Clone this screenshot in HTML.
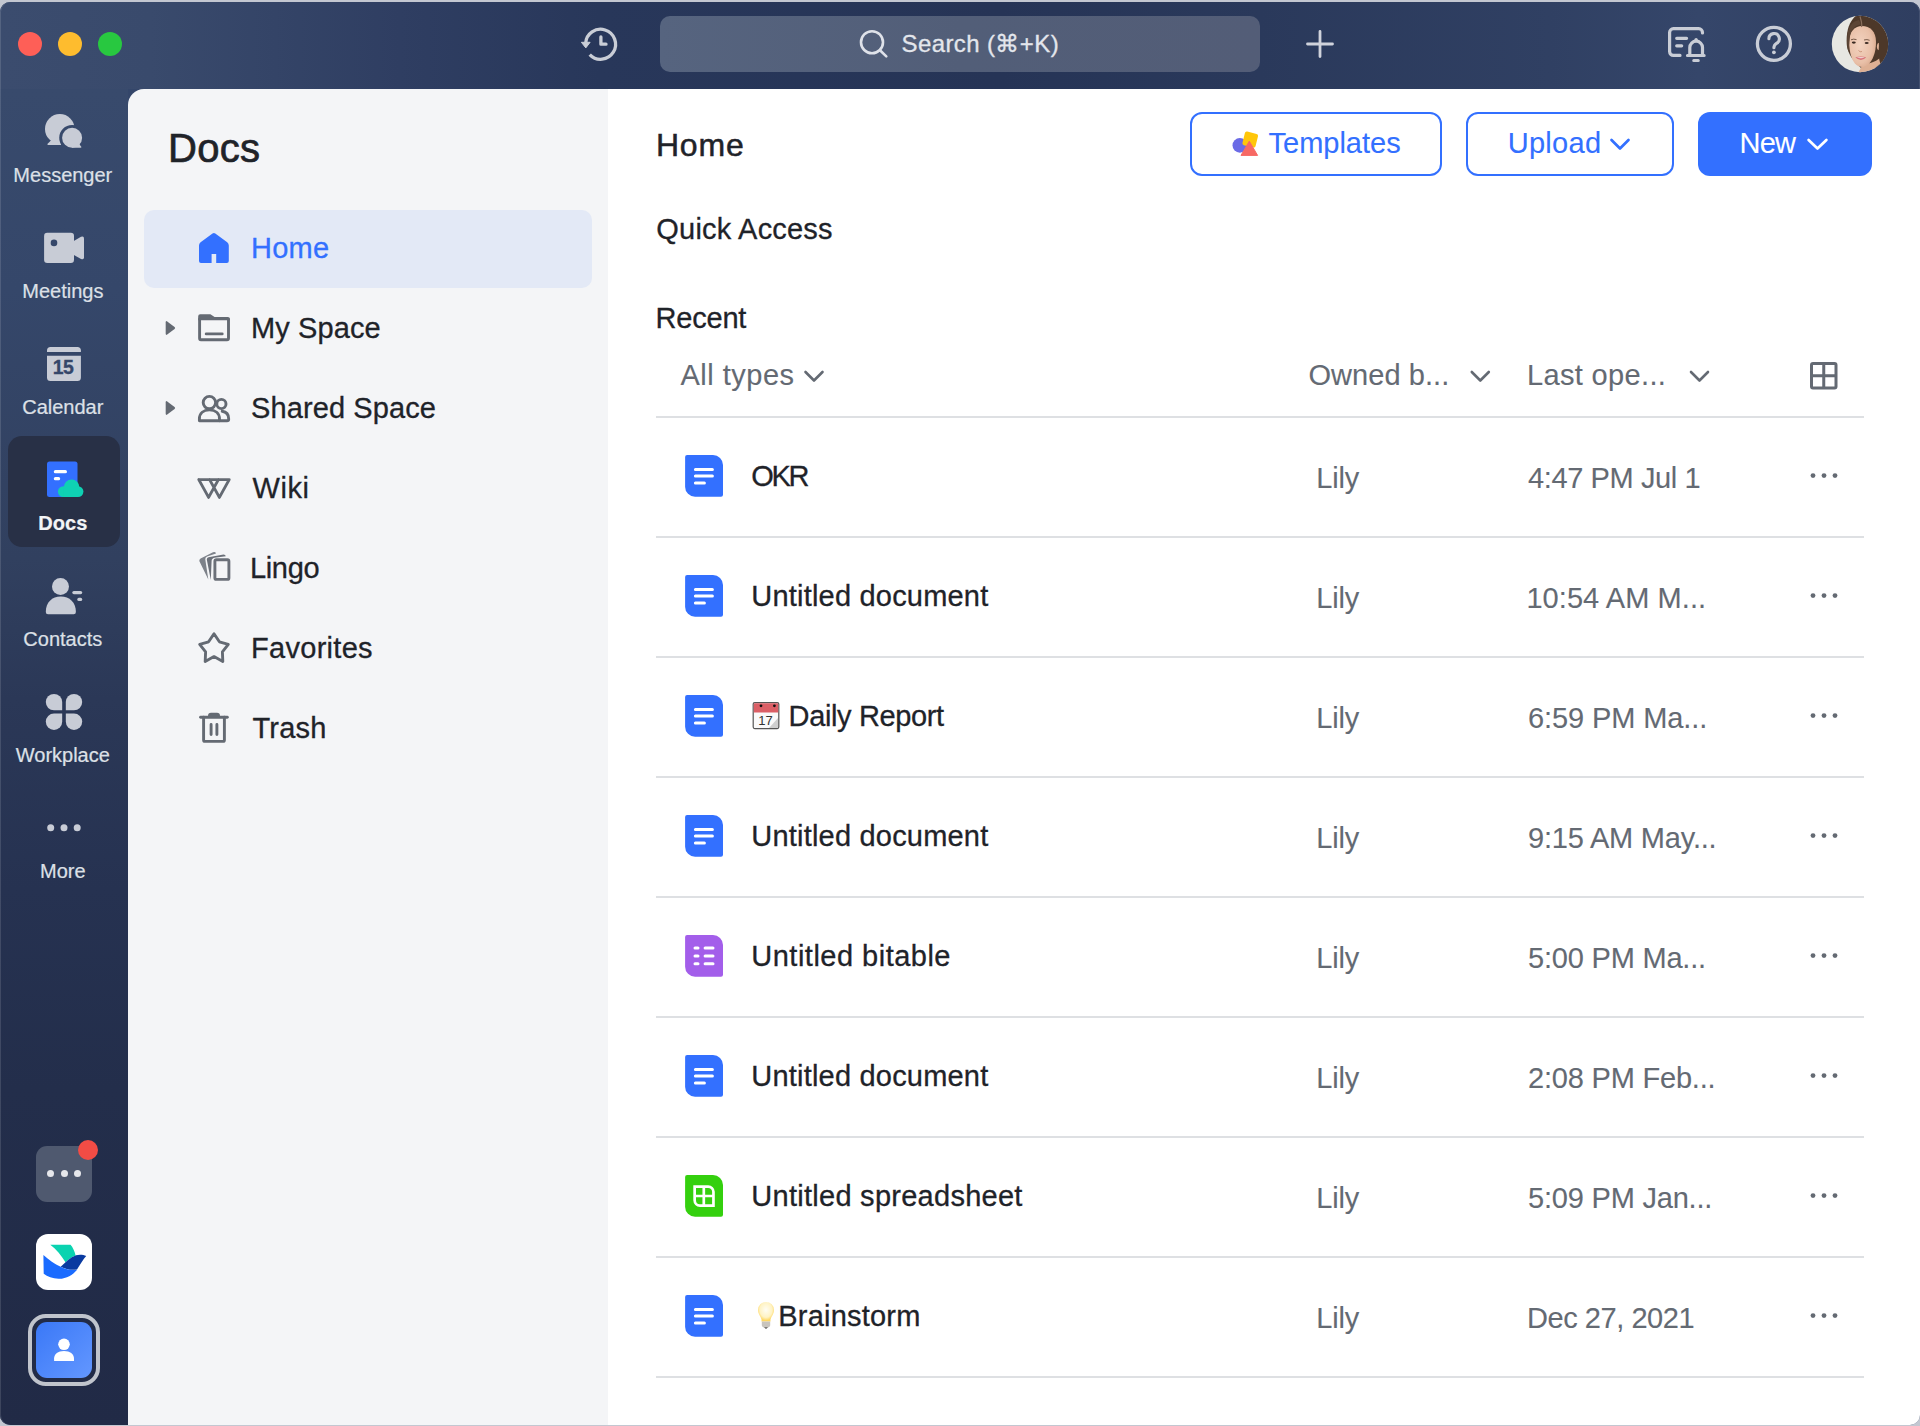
<!DOCTYPE html>
<html><head><meta charset="utf-8">
<style>
*{margin:0;padding:0;box-sizing:border-box}
html,body{width:1920px;height:1426px;overflow:hidden;background:#c3c7d1;font-family:"Liberation Sans",sans-serif}
.win{position:absolute;left:0;top:1.5px;width:1920px;height:1423.5px;border-radius:10px;overflow:hidden;background:#34466a}
.tb{position:absolute;left:0;top:0;width:1920px;height:87px;background:linear-gradient(90deg,#3b4c6e 0px,#394a6c 150px,#2f3e62 400px,#28375a 600px,#263456 1000px,#2a395b 1260px,#304063 1550px,#35466a 1700px,#2f3e60 1920px)}
.rail{position:absolute;left:0;top:87px;width:128px;height:1337px;background:linear-gradient(180deg,#384a6c 0px,#35476a 200px,#31405f 470px,#2b3857 610px,#263251 800px,#232e4b 1000px,#212a46 1337px)}
.panel{position:absolute;left:128px;top:87px;width:480px;height:1337px;background:#f4f5f7;border-top-left-radius:16px}
.main{position:absolute;left:608px;top:87px;width:1312px;height:1337px;background:#fff}
.t{position:absolute;white-space:nowrap;-webkit-text-stroke:0.3px currentColor}
.ab{position:absolute}
.lbl{position:absolute;left:-1.2px;width:128px;text-align:center;font-size:20px;line-height:20px;color:#dde0e7;-webkit-text-stroke:0.2px currentColor}
.nav{position:absolute;left:251px;font-size:29px;line-height:27.3px;color:#1f2329;letter-spacing:0.1px;-webkit-text-stroke:0.3px currentColor;white-space:nowrap}
.row-t{position:absolute;left:751px;font-size:29px;line-height:27.3px;color:#1f2329;letter-spacing:0.2px;-webkit-text-stroke:0.3px currentColor;white-space:nowrap}
.row-o{position:absolute;left:1316.3px;font-size:29px;line-height:27.3px;color:#646a73;letter-spacing:-0.2px;-webkit-text-stroke:0.1px currentColor;white-space:nowrap}
.row-d{position:absolute;left:1528px;font-size:29px;line-height:27.3px;color:#646a73;letter-spacing:-0.2px;-webkit-text-stroke:0.1px currentColor;white-space:nowrap}
.line{position:absolute;left:656px;width:1208px;height:2px;background:#dee0e3}
</style></head><body>
<div class="win">
  <div class="tb"></div>
  <div class="rail"></div>
  <div class="panel"></div>
  <div class="main"></div>
  <div class="ab" style="left:0;top:0;width:1920px;height:1423.5px;border-radius:10px;box-shadow:inset 1px 0 0 rgba(255,255,255,0.13),inset -1px 0 0 rgba(255,255,255,0.1)"></div>
</div>


<!-- rail icons -->
<svg class="ab" style="left:0;top:88px" width="128" height="1337" viewBox="0 88 128 1337">
  <defs>
    <mask id="msgm"><rect x="0" y="88" width="128" height="200" fill="#fff"/><circle cx="72.1" cy="137.8" r="12.9" fill="#000"/></mask>
  </defs>
  <g fill="#c8ccd6">
    <g mask="url(#msgm)">
      <circle cx="59.8" cy="128.9" r="14.8"/>
      <path d="M50.8 140.6 C49.8 141.9 48.6 142.9 47.6 143.8 Q46.9 144.9 48 144.9 H61 V134 Z"/>
    </g>
    <circle cx="72.1" cy="137.8" r="10"/>
    <path d="M79.6 144.3 C80.2 145.3 80.8 146.2 81.3 146.8 Q81.7 147.8 80.7 147.8 H72 V140 Z"/>
    <!-- meetings -->
    <rect x="44.1" y="232.8" width="29.9" height="30.1" rx="3.2"/>
    <circle cx="54" cy="242.9" r="3.3" fill="#35476a"/>
    <path d="M73 241.5 L81 236.8 Q84 235.5 84 238.5 V257.3 Q84 260.2 81 258.9 L73 254.6 Z"/>
    <!-- calendar -->
    <path d="M47 351.9 V350.5 A3.5 3.5 0 0 1 50.5 347 H77.4 A3.5 3.5 0 0 1 80.9 350.5 V351.9 Z"/>
    <path d="M47 355.8 H80.9 V377.4 A3.5 3.5 0 0 1 77.4 380.9 H50.5 A3.5 3.5 0 0 1 47 377.4 Z"/>
    <!-- contacts -->
    <circle cx="60.5" cy="586.5" r="8.5"/>
    <path d="M45.8 612 C45.8 602.5 52 596.6 60.8 596.6 C69.6 596.6 75.9 602.5 75.9 612 Q75.9 614.2 73.7 614.2 H48 Q45.8 614.2 45.8 612 Z"/>
    <rect x="72.3" y="591" width="9.9" height="3.2" rx="1.6"/>
    <rect x="77.3" y="597.8" width="4.9" height="3.2" rx="1.6"/>
    <!-- workplace -->
    <path d="M62.2 710.3 H54 A8.2 8.2 0 1 1 62.2 702.1 Z"/>
    <path d="M65.8 710.3 H74 A8.2 8.2 0 1 0 65.8 702.1 Z"/>
    <path d="M62.2 713.6 H54 A8.2 8.2 0 1 0 62.2 721.8 Z"/>
    <path d="M65.8 713.6 H74 A8.2 8.2 0 1 1 65.8 721.8 Z"/>
    <!-- more -->
    <circle cx="50.7" cy="827.8" r="3.5"/><circle cx="64" cy="827.8" r="3.5"/><circle cx="77.2" cy="827.8" r="3.5"/>
  </g>
</svg>
<div class="t" style="left:52.8px;top:357.6px;font-size:19.5px;line-height:19.5px;font-weight:bold;color:#35476a;letter-spacing:-0.6px">15</div>
<div class="lbl" style="top:164.8px">Messenger</div>
<div class="lbl" style="top:280.8px">Meetings</div>
<div class="lbl" style="top:396.8px">Calendar</div>
<!-- docs selected -->
<div class="ab" style="left:8px;top:436px;width:112px;height:111px;border-radius:14px;background:#283046"></div>
<svg class="ab" style="left:40px;top:455px" width="50" height="48" viewBox="40 455 50 48">
  <rect x="47" y="461.5" width="30.5" height="35.5" rx="2.5" fill="#3370ff"/>
  <rect x="53.8" y="470" width="13.2" height="3.3" rx="1.65" fill="#fff"/>
  <rect x="53.8" y="477" width="6.4" height="3.3" rx="1.65" fill="#fff"/>
  <g fill="#0fd1b3"><circle cx="63.3" cy="491.6" r="5.4"/><circle cx="71.6" cy="487.2" r="7.8"/><circle cx="78" cy="491.6" r="5.4"/><rect x="63.3" y="489" width="14.7" height="8" /></g>
</svg>
<div class="lbl" style="top:512.9px;font-weight:bold;color:#f3f4f6">Docs</div>
<div class="lbl" style="top:628.8px">Contacts</div>
<div class="lbl" style="top:744.8px">Workplace</div>
<div class="lbl" style="top:860.8px">More</div>
<!-- bottom apps -->
<div class="ab" style="left:36px;top:1146px;width:56px;height:56px;border-radius:11px;background:#4f596f"></div>
<div class="ab" style="left:47.2px;top:1170.4px;width:7px;height:7px;border-radius:50%;background:#e6e7eb"></div>
<div class="ab" style="left:60.5px;top:1170.4px;width:7px;height:7px;border-radius:50%;background:#e6e7eb"></div>
<div class="ab" style="left:73.8px;top:1170.4px;width:7px;height:7px;border-radius:50%;background:#e6e7eb"></div>
<div class="ab" style="left:78px;top:1140px;width:20px;height:20px;border-radius:50%;background:#f24c45"></div>
<div class="ab" style="left:36px;top:1234px;width:56px;height:56px;border-radius:12px;background:#fff"></div>
<svg class="ab" style="left:36px;top:1234px" width="56" height="56" viewBox="36 1234 56 56">
  <path d="M50.3 1244.7 H70.5 C72.8 1247.2 74.6 1251 75.6 1255.5 C71.5 1257 68.5 1259.5 65.5 1262.3 C61.5 1255.5 56.5 1249.5 50.3 1244.7 Z" fill="#0ad3b0"/>
  <path d="M60.7 1266.7 C66 1262 70 1257.5 76 1255.2 C79.5 1254.2 83.5 1254.6 86.2 1256.1 C83 1259.3 80.6 1264.3 77 1269.5 C71 1270.5 65.5 1269 60.7 1266.7 Z" fill="#0a3aa0"/>
  <path d="M43.4 1255 C49 1260 54.5 1264 60.7 1266.7 C66.5 1269.5 71.5 1270.5 77 1269.7 C73 1274.8 66.5 1279 58.5 1278.8 C52.5 1278.6 47.5 1276.5 43.7 1273.8 Z" fill="#1a6bff"/>
</svg>
<div class="ab" style="left:28px;top:1314px;width:72px;height:72px;border-radius:18px;border:4px solid #c0c4cc"></div>
<div class="ab" style="left:36px;top:1322px;width:56px;height:56px;border-radius:11px;background:linear-gradient(135deg,#3a78f7,#6397ff)"></div>
<svg class="ab" style="left:36px;top:1322px" width="56" height="56" viewBox="36 1322 56 56">
  <circle cx="64" cy="1344.3" r="5.8" fill="#fff"/>
  <path d="M54.1 1361 V1358.5 C54.1 1354 58 1351 64 1351 C70 1351 74 1354 74 1358.5 V1361 Z" fill="#fff"/>
</svg>


<!-- docs panel -->
<div class="t" style="left:168px;top:128px;font-size:40px;line-height:40px;color:#1f2329;letter-spacing:0.3px;-webkit-text-stroke:0.7px #1f2329">Docs</div>
<div class="ab" style="left:144px;top:210px;width:448px;height:78px;border-radius:10px;background:#e3e9f6"></div>
<svg class="ab" style="left:190px;top:225px" width="48" height="48" viewBox="190 225 48 48">
  <path d="M199 245.5 Q199 243.5 200.6 242.3 L212.5 233.6 Q213.9 232.6 215.3 233.6 L227.2 242.3 Q228.8 243.5 228.8 245.5 V261 Q228.8 263 226.8 263 H216.2 V254 H211.6 V263 H201 Q199 263 199 261 Z" fill="#3370ff"/>
</svg>
<div class="nav" style="top:235.20px;color:#3370ff;letter-spacing:0.25px">Home</div>
<svg class="ab" style="left:150px;top:300px" width="100" height="460" viewBox="150 300 100 460">
  <g fill="#646a73">
    <path d="M165.7 322.2 Q165.7 320.5 167.2 321.4 L174.6 327 Q175.6 328 174.6 329 L167.2 334.6 Q165.7 335.5 165.7 333.8 Z"/>
    <path d="M165.7 402.2 Q165.7 400.5 167.2 401.4 L174.6 407 Q175.6 408 174.6 409 L167.2 414.6 Q165.7 415.5 165.7 413.8 Z"/>
  </g>
  <g fill="none" stroke="#646a73" stroke-width="2.9" stroke-linecap="round" stroke-linejoin="round">
    <!-- folder -->
    <path d="M199.6 319 V338.3 Q199.6 339.8 201 339.8 H227 Q228.5 339.8 228.5 338.3 V319.5"/>
    <path d="M206.2 333.9 H222.2"/>
    <!-- people -->
    <circle cx="209.4" cy="402.6" r="6.2"/>
    <circle cx="221.4" cy="404" r="4.6"/>
    <path d="M199.4 420.8 V419 C199.4 413.2 203.6 409.9 209.4 409.9 C215.2 409.9 219.5 413.2 219.5 419 V420.8 Z"/>
    <path d="M219.5 420.8 H227 Q228.7 420.8 228.7 419 C228.7 414.6 226 411.8 222.2 411.3"/>
    <!-- wiki -->
    <path d="M198.8 479.6 H229.2 L219.4 497.4 L209.6 479.6 M218.4 479.6 L208.6 497.4 L198.8 479.6"/>
    <!-- star -->
    <path d="M214 633.7 L219.4 641.8 L228.3 644.4 L222.4 651.9 L222.8 661.5 L214 656.6 L205.2 661.5 L205.6 651.9 L199.7 644.4 L208.6 641.8 Z"/>
    <!-- trash -->
    <path d="M200.6 717.3 H227.3"/>
    <path d="M203.6 717.3 V740 Q203.6 741.4 205 741.4 H223 Q224.4 741.4 224.4 740 V717.3"/>
    <path d="M211.1 724.5 V734.5 M216.9 724.5 V734.5"/>
  </g>
  <path d="M208 716 Q208 712.8 211 712.8 H217 Q220 712.8 220 716 Z" fill="#646a73"/>
  <path d="M198.2 320.3 V316.2 Q198.2 314.2 200.2 314.2 H210.4 L214.6 317.1 H227.9 Q229.9 317.1 229.9 319.1 V320.3 Z" fill="#646a73"/>
  <!-- lingo -->
  <rect x="214.9" y="559.7" width="14" height="19.7" rx="1.5" fill="none" stroke="#6b7079" stroke-width="2.9"/>
  <path d="M199.3 561 Q199.3 559.3 200.6 558.6 L213 552.3 Q215.5 551.5 216 553.5 L207 556.5 Q205 557.5 205.3 559.6 L208.3 579.5 Z" fill="#7d828a"/>
  <path d="M206.8 559.6 Q206.8 557.8 208.5 557.3 L223.5 554.5 Q225.5 554.8 225.8 556.2 L214.5 557.7 Q211.6 558.4 211.6 561 L210.8 579.9 Z" fill="#6b7079"/>
</svg>
<div class="nav" style="top:315.20px">My Space</div>
<div class="nav" style="top:395.20px">Shared Space</div>
<div class="nav" style="top:475.20px;left:252.5px;letter-spacing:0.6px">Wiki</div>
<div class="nav" style="top:555.20px;left:249.9px;letter-spacing:-0.3px">Lingo</div>
<div class="nav" style="top:635.20px;letter-spacing:0.29px">Favorites</div>
<div class="nav" style="top:715.20px;left:252.5px;letter-spacing:0.2px">Trash</div>


<!-- main -->
<div class="t" style="left:655.9px;top:128.8px;font-size:32px;line-height:32px;color:#1f2329;letter-spacing:0.85px;-webkit-text-stroke:0.5px #1f2329">Home</div>
<div class="ab" style="left:1190px;top:112px;width:252px;height:64px;border-radius:12px;border:2px solid #3370ff"></div>
<svg class="ab" style="left:1228px;top:128px" width="36" height="32" viewBox="1228 128 36 32">
  <circle cx="1239.8" cy="145.4" r="7.3" fill="#6b6be6"/>
  <rect x="1243.5" y="132.5" width="13.5" height="14" rx="2" transform="rotate(14 1250 139.5)" fill="#ffc60a"/>
  <path d="M1249.3 141.2 L1257.6 155.4 L1241 155.4 Z" fill="#f76964" stroke="#f76964" stroke-width="1" stroke-linejoin="round"/>
</svg>
<div class="t" style="left:1268.5px;top:130.4px;font-size:29px;line-height:27.3px;color:#3370ff;letter-spacing:0.00px;-webkit-text-stroke:0.1px currentColor">Templates</div>
<div class="ab" style="left:1466px;top:112px;width:208px;height:64px;border-radius:12px;border:2px solid #3370ff"></div>
<div class="t" style="left:1507.7px;top:130.4px;font-size:29px;line-height:27.3px;color:#3370ff;letter-spacing:0.3px;-webkit-text-stroke:0.1px currentColor">Upload</div>
<svg class="ab" style="left:1600px;top:130px" width="40" height="30" viewBox="1600 130 40 30">
  <path d="M1611.5 140 L1620 148.5 L1628.5 140" fill="none" stroke="#3370ff" stroke-width="2.7" stroke-linecap="round" stroke-linejoin="round"/>
</svg>
<div class="ab" style="left:1698px;top:112px;width:174px;height:64px;border-radius:12px;background:#3370ff"></div>
<div class="t" style="left:1739.5px;top:130.4px;font-size:29px;line-height:27.3px;color:#fff;letter-spacing:-0.75px;-webkit-text-stroke:0.1px currentColor">New</div>
<svg class="ab" style="left:1800px;top:130px" width="40" height="30" viewBox="1800 130 40 30">
  <path d="M1808.6 140 L1817.5 148.5 L1826.4 140" fill="none" stroke="#fff" stroke-width="2.7" stroke-linecap="round" stroke-linejoin="round"/>
</svg>
<div class="t" style="left:656.3px;top:215.9px;font-size:29px;line-height:27.3px;color:#1f2329;letter-spacing:0.20px">Quick Access</div>
<div class="t" style="left:655.5px;top:304.6px;font-size:29px;line-height:27.3px;color:#1f2329;letter-spacing:-0.20px">Recent</div>
<div class="t" style="left:680.5px;top:362.2px;font-size:29px;line-height:27.3px;color:#646a73;letter-spacing:0.50px;-webkit-text-stroke:0.1px currentColor">All types</div>
<div class="t" style="left:1308.5px;top:362.3px;font-size:29px;line-height:27.3px;color:#646a73;letter-spacing:0.05px;-webkit-text-stroke:0.1px currentColor">Owned b...</div>
<div class="t" style="left:1527px;top:362.3px;font-size:29px;line-height:27.3px;color:#646a73;letter-spacing:0.35px;-webkit-text-stroke:0.1px currentColor">Last ope...</div>
<svg class="ab" style="left:656px;top:350px" width="1210" height="50" viewBox="656 350 1210 50">
  <g fill="none" stroke="#646a73" stroke-width="2.6" stroke-linecap="round" stroke-linejoin="round">
    <path d="M805.5 372 L814 380.5 L822.5 372"/>
    <path d="M1471.8 372 L1480.3 380.5 L1488.8 372"/>
    <path d="M1691 372 L1699.5 380.5 L1708 372"/>
  </g>
  <g fill="none" stroke="#646a73" stroke-width="3">
    <rect x="1811.5" y="363.5" width="24.5" height="24.5" rx="1.5"/>
    <path d="M1823.75 363.5 V388 M1811.5 375.75 H1836"/>
  </g>
</svg>
<div class="line" style="top:416px"></div>
<svg class="ab" style="left:680px;top:417px" width="50" height="120" viewBox="680 417 50 120"><path d="M685.1 457.1 Q685.1 455.1 687.1 455.1 H713 A10 10 0 0 1 723 465.1 V494.7 Q723 496.7 721 496.7 H695.1 A10 10 0 0 1 685.1 486.7 Z" fill="#3370ff"/><path d="M695.4 469.4 H712.4 M695.4 476.1 H712.4 M695.4 482.9 H704.4" stroke="#fff" stroke-width="3" stroke-linecap="round"/></svg>
<div class="row-t" style="left:751.3px;top:463.20px;letter-spacing:-2.4px">OKR</div>
<div class="row-o" style="top:464.6px">Lily</div>
<div class="row-d" style="top:464.6px;letter-spacing:-0.39px">4:47 PM Jul 1</div>
<svg class="ab" style="left:1800px;top:457px" width="48" height="40" viewBox="1800 457 48 40"><g fill="#646a73"><circle cx="1813" cy="475.6" r="2.4"/><circle cx="1824" cy="475.6" r="2.4"/><circle cx="1835" cy="475.6" r="2.4"/></g></svg>
<div class="line" style="top:536px"></div>
<svg class="ab" style="left:680px;top:537px" width="50" height="120" viewBox="680 537 50 120"><path d="M685.1 577.1 Q685.1 575.1 687.1 575.1 H713 A10 10 0 0 1 723 585.1 V614.7 Q723 616.7 721 616.7 H695.1 A10 10 0 0 1 685.1 606.7 Z" fill="#3370ff"/><path d="M695.4 589.4 H712.4 M695.4 596.1 H712.4 M695.4 602.9 H704.4" stroke="#fff" stroke-width="3" stroke-linecap="round"/></svg>
<div class="row-t" style="left:751.3px;top:583.20px">Untitled document</div>
<div class="row-o" style="top:584.5999999999999px">Lily</div>
<div class="row-d" style="top:584.5999999999999px;left:1526.4px;letter-spacing:0.07px">10:54 AM M...</div>
<svg class="ab" style="left:1800px;top:577px" width="48" height="40" viewBox="1800 577 48 40"><g fill="#646a73"><circle cx="1813" cy="595.6" r="2.4"/><circle cx="1824" cy="595.6" r="2.4"/><circle cx="1835" cy="595.6" r="2.4"/></g></svg>
<div class="line" style="top:656px"></div>
<svg class="ab" style="left:680px;top:657px" width="50" height="120" viewBox="680 657 50 120"><path d="M685.1 697.1 Q685.1 695.1 687.1 695.1 H713 A10 10 0 0 1 723 705.1 V734.7 Q723 736.7 721 736.7 H695.1 A10 10 0 0 1 685.1 726.7 Z" fill="#3370ff"/><path d="M695.4 709.4 H712.4 M695.4 716.1 H712.4 M695.4 722.9 H704.4" stroke="#fff" stroke-width="3" stroke-linecap="round"/></svg>
<svg class="ab" style="left:752px;top:700px" width="28" height="30" viewBox="0 0 28 30">
  <rect x="1.2" y="2.6" width="25.6" height="26" rx="1.5" fill="#fafafa" stroke="#555" stroke-width="1.2"/>
  <path d="M1.8 4 Q1.8 3.2 2.6 3.2 H25.4 Q26.2 3.2 26.2 4 V12.6 H1.8 Z" fill="#db5f66"/>
  <circle cx="9" cy="5.8" r="1.4" fill="#111"/><circle cx="22.4" cy="5.8" r="1.4" fill="#111"/>
  <text x="13.6" y="25" text-anchor="middle" font-family="Liberation Sans" font-size="13" fill="#333">17</text>
  <path d="M17 28 L26 18 L26 28 Z" fill="#cfcfcf"/>
</svg>
<div class="row-t" style="left:788.6px;top:703.20px;letter-spacing:-0.37px">Daily Report</div>
<div class="row-o" style="top:704.5999999999999px">Lily</div>
<div class="row-d" style="top:704.5999999999999px;letter-spacing:-0.1px">6:59 PM Ma...</div>
<svg class="ab" style="left:1800px;top:697px" width="48" height="40" viewBox="1800 697 48 40"><g fill="#646a73"><circle cx="1813" cy="715.6" r="2.4"/><circle cx="1824" cy="715.6" r="2.4"/><circle cx="1835" cy="715.6" r="2.4"/></g></svg>
<div class="line" style="top:776px"></div>
<svg class="ab" style="left:680px;top:777px" width="50" height="120" viewBox="680 777 50 120"><path d="M685.1 817.1 Q685.1 815.1 687.1 815.1 H713 A10 10 0 0 1 723 825.1 V854.7 Q723 856.7 721 856.7 H695.1 A10 10 0 0 1 685.1 846.7 Z" fill="#3370ff"/><path d="M695.4 829.4 H712.4 M695.4 836.1 H712.4 M695.4 842.9 H704.4" stroke="#fff" stroke-width="3" stroke-linecap="round"/></svg>
<div class="row-t" style="left:751.3px;top:823.20px">Untitled document</div>
<div class="row-o" style="top:824.5999999999999px">Lily</div>
<div class="row-d" style="top:824.5999999999999px">9:15 AM May...</div>
<svg class="ab" style="left:1800px;top:817px" width="48" height="40" viewBox="1800 817 48 40"><g fill="#646a73"><circle cx="1813" cy="835.6" r="2.4"/><circle cx="1824" cy="835.6" r="2.4"/><circle cx="1835" cy="835.6" r="2.4"/></g></svg>
<div class="line" style="top:896px"></div>
<svg class="ab" style="left:680px;top:897px" width="50" height="120" viewBox="680 897 50 120"><path d="M685.1 937.1 Q685.1 935.1 687.1 935.1 H713 A10 10 0 0 1 723 945.1 V974.7 Q723 976.7 721 976.7 H695.1 A10 10 0 0 1 685.1 966.7 Z" fill="#a35eea"/><path d="M695 948.1 H698 M705.1 948.1 H713 M695 955.9 H698 M705.1 955.9 H713 M695 963.7 H698 M705.1 963.7 H713" stroke="#fff" stroke-width="3" stroke-linecap="round"/></svg>
<div class="row-t" style="left:751.3px;top:943.20px;letter-spacing:0.49px">Untitled bitable</div>
<div class="row-o" style="top:944.5999999999999px">Lily</div>
<div class="row-d" style="top:944.5999999999999px">5:00 PM Ma...</div>
<svg class="ab" style="left:1800px;top:937px" width="48" height="40" viewBox="1800 937 48 40"><g fill="#646a73"><circle cx="1813" cy="955.6" r="2.4"/><circle cx="1824" cy="955.6" r="2.4"/><circle cx="1835" cy="955.6" r="2.4"/></g></svg>
<div class="line" style="top:1016px"></div>
<svg class="ab" style="left:680px;top:1017px" width="50" height="120" viewBox="680 1017 50 120"><path d="M685.1 1057.1 Q685.1 1055.1 687.1 1055.1 H713 A10 10 0 0 1 723 1065.1 V1094.7 Q723 1096.7 721 1096.7 H695.1 A10 10 0 0 1 685.1 1086.7 Z" fill="#3370ff"/><path d="M695.4 1069.4 H712.4 M695.4 1076.1 H712.4 M695.4 1082.9 H704.4" stroke="#fff" stroke-width="3" stroke-linecap="round"/></svg>
<div class="row-t" style="left:751.3px;top:1063.20px">Untitled document</div>
<div class="row-o" style="top:1064.6px">Lily</div>
<div class="row-d" style="top:1064.6px">2:08 PM Feb...</div>
<svg class="ab" style="left:1800px;top:1057px" width="48" height="40" viewBox="1800 1057 48 40"><g fill="#646a73"><circle cx="1813" cy="1075.6" r="2.4"/><circle cx="1824" cy="1075.6" r="2.4"/><circle cx="1835" cy="1075.6" r="2.4"/></g></svg>
<div class="line" style="top:1136px"></div>
<svg class="ab" style="left:680px;top:1137px" width="50" height="120" viewBox="680 1137 50 120"><path d="M685.1 1177.1 Q685.1 1175.1 687.1 1175.1 H713 A10 10 0 0 1 723 1185.1 V1214.7 Q723 1216.7 721 1216.7 H695.1 A10 10 0 0 1 685.1 1206.7 Z" fill="#34d00e"/><path d="M694.65 1186.55 H708.2 A5.25 5.25 0 0 1 713.45 1191.8 V1205.55 H699.9 A5.25 5.25 0 0 1 694.65 1200.3 Z M703.8 1186.55 V1205.55 M694.65 1196 H713.45" fill="none" stroke="#fff" stroke-width="2.7"/></svg>
<div class="row-t" style="left:751.3px;top:1183.20px;letter-spacing:0.27px">Untitled spreadsheet</div>
<div class="row-o" style="top:1184.6px">Lily</div>
<div class="row-d" style="top:1184.6px">5:09 PM Jan...</div>
<svg class="ab" style="left:1800px;top:1177px" width="48" height="40" viewBox="1800 1177 48 40"><g fill="#646a73"><circle cx="1813" cy="1195.6" r="2.4"/><circle cx="1824" cy="1195.6" r="2.4"/><circle cx="1835" cy="1195.6" r="2.4"/></g></svg>
<div class="line" style="top:1256px"></div>
<svg class="ab" style="left:680px;top:1257px" width="50" height="120" viewBox="680 1257 50 120"><path d="M685.1 1297.1 Q685.1 1295.1 687.1 1295.1 H713 A10 10 0 0 1 723 1305.1 V1334.7 Q723 1336.7 721 1336.7 H695.1 A10 10 0 0 1 685.1 1326.7 Z" fill="#3370ff"/><path d="M695.4 1309.4 H712.4 M695.4 1316.1 H712.4 M695.4 1322.9 H704.4" stroke="#fff" stroke-width="3" stroke-linecap="round"/></svg>
<svg class="ab" style="left:756px;top:1300px" width="20" height="32" viewBox="0 0 20 32">
  <defs><radialGradient id="bg7" cx="0.5" cy="0.4" r="0.55"><stop offset="0" stop-color="#fffdf3"/><stop offset="0.7" stop-color="#fff3c4"/><stop offset="1" stop-color="#ffd863"/></radialGradient></defs>
  <path d="M10 2 A8 8 0 0 1 18 10 C18 14 15.5 16 14.5 19.5 V21.5 H5.5 V19.5 C4.5 16 2 14 2 10 A8 8 0 0 1 10 2 Z" fill="url(#bg7)"/>
  <path d="M5.8 21.5 H14.2 V25.5 Q14 27.2 12 27.6 L10 28.6 L8 27.6 Q6 27.2 5.8 25.5 Z" fill="#c8c4bd"/>
  <path d="M8 27.4 H12 L10 28.8 Z" fill="#333"/>
</svg>
<div class="row-t" style="left:778.3px;top:1303.20px">Brainstorm</div>
<div class="row-o" style="top:1304.6px">Lily</div>
<div class="row-d" style="top:1304.6px;left:1527px;letter-spacing:-0.45px">Dec 27, 2021</div>
<svg class="ab" style="left:1800px;top:1297px" width="48" height="40" viewBox="1800 1297 48 40"><g fill="#646a73"><circle cx="1813" cy="1315.6" r="2.4"/><circle cx="1824" cy="1315.6" r="2.4"/><circle cx="1835" cy="1315.6" r="2.4"/></g></svg>
<div class="line" style="top:1376px"></div>

<!-- traffic lights -->
<div class="ab" style="left:18px;top:32px;width:24px;height:24px;border-radius:50%;background:#fe5f57"></div>
<div class="ab" style="left:58px;top:32px;width:24px;height:24px;border-radius:50%;background:#febc2e"></div>
<div class="ab" style="left:98px;top:32px;width:24px;height:24px;border-radius:50%;background:#28c840"></div>
<!-- history -->
<svg class="ab" style="left:570px;top:14px" width="60" height="60" viewBox="570 14 60 60">
  <path d="M585.6 43.5 A15 15 0 1 1 589.7 54.6" fill="none" stroke="#c9cdd6" stroke-width="3.3" stroke-linecap="butt"/>
  <path d="M581.4 42.3 L590.1 42.3 L585.8 47.9 Z" fill="#c9cdd6" stroke="#c9cdd6" stroke-width="1" stroke-linejoin="round"/>
  <path d="M600.9 37 L600.9 44.2 L606 44.2" fill="none" stroke="#c9cdd6" stroke-width="3.3" stroke-linecap="round" stroke-linejoin="round"/>
</svg>
<!-- search -->
<div class="ab" style="left:660px;top:16px;width:600px;height:56px;border-radius:10px;background:linear-gradient(90deg,#56647f,#525e78 50%,#535d77)"></div>
<svg class="ab" style="left:850px;top:20px" width="50" height="50" viewBox="850 20 50 50">
  <circle cx="872" cy="42.2" r="11" fill="none" stroke="#dfe2e9" stroke-width="2.6"/>
  <path d="M880.5 50.8 L886.3 56.4" stroke="#dfe2e9" stroke-width="2.6" stroke-linecap="round"/>
</svg>
<div class="t" style="left:901.5px;top:31.7px;font-size:24px;line-height:24px;color:#e3e6ec;letter-spacing:0.4px">Search (⌘+K)</div>
<!-- plus -->
<svg class="ab" style="left:1300px;top:24px" width="40" height="40" viewBox="1300 24 40 40">
  <path d="M1320 31.5 V56.5 M1307.5 44 H1332.5" stroke="#d0d3dc" stroke-width="2.8" stroke-linecap="round"/>
</svg>
<!-- notification -->
<svg class="ab" style="left:1660px;top:20px" width="52" height="46" viewBox="1660 20 52 46">
  <path d="M1702.5 33 V32.5 A3.8 3.8 0 0 0 1698.7 28.7 H1673.4 A3.8 3.8 0 0 0 1669.6 32.5 V51.6 A3.8 3.8 0 0 0 1673.4 55.4 H1680" fill="none" stroke="#c9cdd6" stroke-width="3.2" stroke-linecap="round"/>
  <path d="M1676.7 38.3 H1686.6 M1676.7 45.8 H1681.7" stroke="#c9cdd6" stroke-width="3.2" stroke-linecap="round"/>
  <path d="M1689.8 55 V47.5 A6.35 6.35 0 0 1 1702.5 47.5 V55" fill="none" stroke="#c9cdd6" stroke-width="3.2"/>
  <path d="M1687.4 55.4 H1704.2 M1693.7 60.4 H1698.3" stroke="#c9cdd6" stroke-width="3" stroke-linecap="round"/>
  <circle cx="1696.1" cy="39.6" r="1.7" fill="#c9cdd6"/>
</svg>
<!-- help -->
<svg class="ab" style="left:1750px;top:20px" width="48" height="48" viewBox="1750 20 48 48">
  <circle cx="1773.9" cy="43.8" r="16.5" fill="none" stroke="#c9cdd6" stroke-width="3.3"/>
  <path d="M1768.9 38.8 A5.2 5.2 0 1 1 1776.6 43.3 C1774.6 44.7 1773.9 45.6 1773.9 47.8" fill="none" stroke="#c9cdd6" stroke-width="3.1" stroke-linecap="round"/>
  <circle cx="1773.9" cy="52.3" r="1.9" fill="#c9cdd6"/>
</svg>
<!-- avatar -->
<svg class="ab" style="left:1831px;top:15px" width="58" height="58" viewBox="0 0 58 58">
  <defs><clipPath id="avc"><circle cx="29" cy="29" r="28.2"/></clipPath>
  <radialGradient id="skin" cx="0.4" cy="0.45" r="0.65"><stop offset="0" stop-color="#f3d3c0"/><stop offset="0.7" stop-color="#e9c0a8"/><stop offset="1" stop-color="#d9a88c"/></radialGradient></defs>
  <g clip-path="url(#avc)">
    <rect width="58" height="58" fill="#e7e7e2"/>
    <path d="M25 0.5 C38 -1 52 6 56.5 20 C59 32 56 44 50 53 L30 53 C22 46 16.5 38 15.8 30 C15 18 17 8 25 0.5 Z" fill="#4d3829"/>
    <path d="M32 49 C38 49 44 47 49 43 L56 58 L27 58 Z" fill="#deb094"/>
    <ellipse cx="48.3" cy="31.5" rx="2.4" ry="3.8" fill="#e0b196"/>
    <path d="M18.2 27 C18.2 16 24 11 31 11 C39 11 45 16.5 45 27 C45 37 42 45.5 36.5 50.2 C33.5 52.6 28.5 52.6 25.5 50 C20.5 45.5 18.2 37 18.2 27 Z" fill="url(#skin)"/>
    <path d="M40 11.5 C46 15.5 48.5 24 47.8 33 C47.3 40 48 46 50.5 52 L55.5 45 C59 30 56.5 14 44 6.5 Z" fill="#4d3829"/>
    <path d="M18.5 25 C19 15 24 10 30 9.5 L28 5 C21 6 16.5 13 16.2 22 C16 29 16.5 34 17.6 37 C17.8 33 18 29 18.5 25 Z" fill="#5c4535"/>
    <path d="M29 1.5 C30 5 31.5 9 30.5 12" stroke="#8a6f5c" stroke-width="1.2" fill="none"/>
    <path d="M20 24.8 Q22.5 23.6 25.5 24.6" stroke="#6b4e3d" stroke-width="0.9" fill="none"/>
    <path d="M33 25 Q36 24 38.6 25.3" stroke="#6b4e3d" stroke-width="0.9" fill="none"/>
    <ellipse cx="22.8" cy="27.6" rx="2" ry="1.1" fill="#3a2a22"/>
    <ellipse cx="35.7" cy="28" rx="2" ry="1.1" fill="#3a2a22"/>
    <path d="M27.5 35.5 Q29 37.5 31 36.5" stroke="#c99378" stroke-width="0.9" fill="none"/>
    <path d="M24.3 42.2 Q30 41 35.2 42.2 Q30 47.8 24.3 42.2 Z" fill="#d8747a"/>
    <path d="M25.5 42.6 Q30 41.8 34 42.6 Q30 44 25.5 42.6 Z" fill="#f7f1ee"/>
  </g>
</svg>

</body></html>
